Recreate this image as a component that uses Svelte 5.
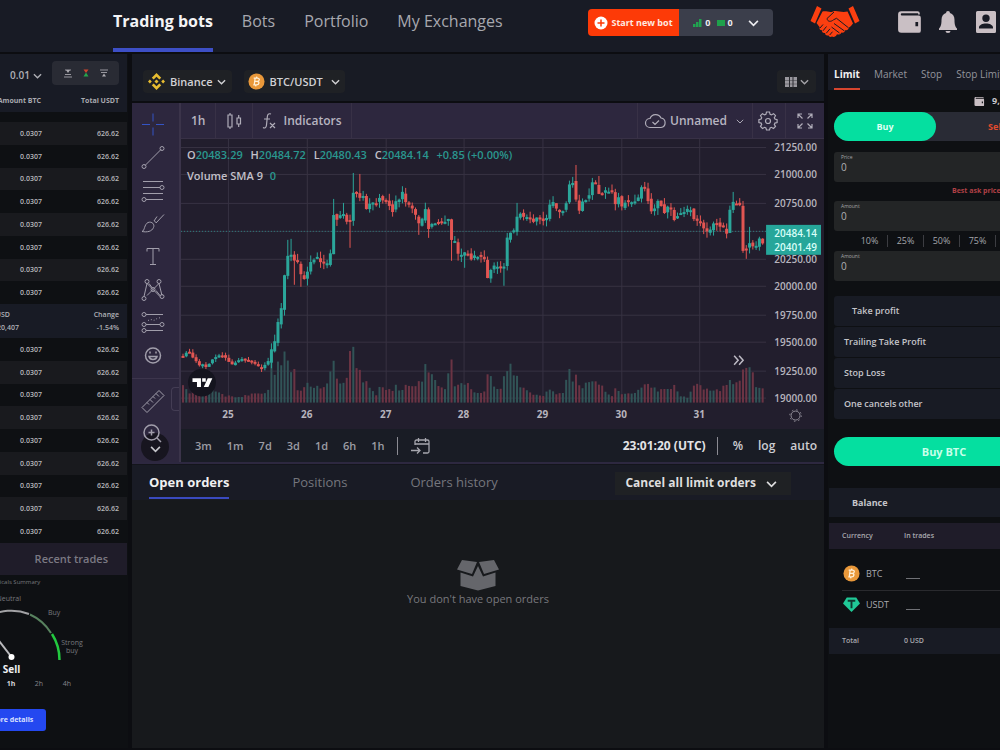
<script>
  const asks = Array.from({ length: 8 }, () => ['0.0307', '626.62']);
  const bids = Array.from({ length: 9 }, () => ['0.0307', '626.62']);
  const nav = ['Trading bots', 'Bots', 'Portfolio', 'My Exchanges'];
  const ranges = ['3m', '1m', '7d', '3d', '1d', '6h', '1h'];
  const orderTypes = ['Limit', 'Market', 'Stop', 'Stop Limit'];
  const options = ['Take profit', 'Trailing Take Profit', 'Stop Loss', 'One cancels other'];
  const priceLabels = [
    [8, '21250.00'], [35, '21000.00'], [64, '20750.00'], [92, ''], [120, '20250.00'],
    [147, '20000.00'], [176, '19750.00'], [203, '19500.00'], [232, '19250.00'], [259, '19000.00']
  ];
  const days = [[47, 25], [126, 26], [205, 27], [283, 28], [362, 29], [441, 30], [519, 31]];

  // Close prices as [x, y] on the plot, joined linearly between points.
  const closes = [
    [1,218],[6,213],[9,214],[12,219],[15,222],[16,227],[21,226],[25,228],[28,225],[31,221],[34,219],[37,216],[41,217],[44,219],[47,222],[51,226],[55,223],[58,221],[62,220],[65,221],[68,222],[71,223],[75,226],[80,230],[83,227],[87,223],[89,220],[92,204],[95,204],[98,176],[101,169],[104,134],[107,118],[112,116],[115,126],[118,122],[121,141],[125,139],[128,129],[131,121],[136,119],[139,121],[144,127],[148,124],[151,109],[153,73],[157,82],[161,73],[165,81],[169,86],[172,53],[176,54],[180,61],[183,56],[186,71],[190,63],[196,64],[200,56],[203,62],[207,64],[212,72],[215,63],[219,59],[222,54],[225,63],[231,69],[236,79],[239,88],[242,79],[246,66],[248,89],[252,84],[257,84],[266,82],[269,77],[271,103],[275,102],[277,116],[282,117],[286,112],[292,123],[295,115],[299,119],[303,116],[307,139],[311,128],[316,126],[321,129],[325,126],[327,96],[332,93],[336,89],[337,69],[341,76],[346,79],[349,79],[353,82],[356,77],[361,82],[366,79],[369,66],[372,63],[376,71],[381,74],[385,69],[388,46],[392,41],[396,63],[399,71],[402,63],[405,62],[409,55],[412,44],[415,44],[418,56],[422,53],[431,52],[435,64],[438,56],[441,69],[445,62],[451,63],[457,63],[462,46],[466,53],[470,71],[474,71],[477,62],[482,68],[485,76],[489,64],[494,81],[499,73],[504,73],[510,70],[513,78],[516,86],[518,77],[522,88],[526,95],[531,89],[534,83],[539,86],[543,89],[547,94],[550,69],[553,64],[558,66],[561,69],[562,111],[566,110],[569,103],[572,108],[576,107],[579,99],[583,106],[586,103]
  ];
  const spikes = [
    [107,101],[110,100],[114,146],[121,148],[153,60],[162,64],[168,109],[172,34],[178,35],[237,96],[247,99],[270,122],[284,129],[310,144],[322,147],[337,64],[394,26],[417,37],[463,43],[552,53],[571,88],[565,120]
  ];
  const volumes = [
    [1,17],[7,10],[17,9],[34,12],[44,6],[59,6],[81,9],[87,12],[90,36],[94,27],[97,46],[100,33],[103,59],[106,46],[110,31],[113,33],[116,13],[123,13],[127,18],[131,14],[139,14],[144,16],[149,25],[152,40],[156,25],[162,18],[167,25],[171,65],[175,31],[179,31],[183,20],[189,16],[195,5],[199,17],[203,13],[211,12],[215,17],[219,12],[224,16],[232,16],[237,20],[241,16],[244,37],[249,35],[254,20],[259,13],[266,12],[270,49],[273,12],[277,18],[283,20],[289,16],[295,9],[303,9],[306,25],[311,23],[315,13],[320,13],[323,25],[327,38],[330,33],[335,28],[338,18],[346,11],[354,7],[364,7],[370,15],[375,9],[383,10],[388,35],[392,18],[395,32],[399,18],[404,14],[408,22],[416,20],[421,18],[427,7],[433,7],[435,15],[441,9],[452,9],[461,15],[471,17],[477,13],[487,13],[494,16],[499,7],[509,5],[513,17],[521,15],[531,10],[541,12],[549,24],[554,18],[559,20],[563,30],[568,36],[572,28],[576,18],[581,17],[585,10]
  ];

  function at(points, x) {
    let i = 1;
    while (i < points.length - 1 && points[i][0] < x) i++;
    const [x0, y0] = points[i - 1];
    const [x1, y1] = points[i];
    const t = Math.max(0, Math.min(1, (x - x0) / (x1 - x0)));
    return y0 + (y1 - y0) * t;
  }
  const wave = (n) => Math.abs((Math.sin(n * 12.9898) * 43758.5453) % 1);

  const step = 3.28;
  const candles = Array.from({ length: 178 }, (_, i) => {
    const x = 2 + i * step;
    const calm = x < 88 ? 0.5 : 1;
    const open = at(closes, x - step) + (wave(i) - 0.5) * 3 * calm;
    const close = at(closes, x) + (wave(i + 400) - 0.5) * 3 * calm;
    let high = Math.min(open, close) - wave(i + 70) * 7 * calm;
    let low = Math.max(open, close) + wave(i + 170) * 7 * calm;
    for (const [sx, sy] of spikes) {
      if (Math.abs(sx - x) <= step / 2) {
        high = Math.min(high, sy);
        low = Math.max(low, sy);
      }
    }
    return {
      x, high, low,
      top: Math.min(open, close),
      size: Math.max(2, Math.abs(open - close)),
      up: close <= open,
      volume: at(volumes, x) * (0.85 + wave(i + 900) * 0.35)
    };
  });
</script>

{#snippet chevron(size = 9)}
  <svg class="chevron" width={size} height={size} viewBox="0 0 10 10" aria-hidden="true"><path d="M1 3.500l4 4 4-4" /></svg>
{/snippet}

{#snippet coin(size = 17)}
  <svg width={size} height={size} viewBox="0 0 18 18" aria-hidden="true">
    <circle cx="9" cy="9" r="8.5" fill="#e9983a" />
    <path d="M7.6 5l-1 8M6 5.4h4.2c2.6.3 2.3 3.3-.4 3.4H7.2h2.4c3 .2 2.4 3.7-.6 3.8H5.6M9.3 3.8l-.3 1.6M8.3 12.6l-.2 1.6" fill="none" stroke="#fff0d8" stroke-width="1.4" />
  </svg>
{/snippet}

{#snippet wallet(size = 26)}
  <svg width={size} height={size} viewBox="0 0 24 24" aria-hidden="true">
    <path fill="#c9bfc4" fill-rule="evenodd" d="M4 2h15a2 2 0 0 1 2 2v1h-1.500V4H4.500a1 1 0 0 0 0 2H20a2 2 0 0 1 2 2v12a2 2 0 0 1-2 2H4a3 3 0 0 1-3-3V5a3 3 0 0 1 3-3zm13 10v4h2.500v-4z" />
  </svg>
{/snippet}

<div class="page">
  <header>
    <nav>
      {#each nav as item, i}
        <a href="#{item}" class:active={i === 0}>{item}</a>
      {/each}
    </nav>
    <div class="bot">
      <button class="start">
        <svg width="14" height="14" viewBox="0 0 14 14" aria-hidden="true"><circle cx="7" cy="7" r="6.500" fill="#fff" /><path d="M7 3.500v7M3.500 7h7" stroke="#fd3a07" stroke-width="1.5" /></svg>
        Start new bot
      </button>
      <button class="counts" aria-label="Bot status">
        <svg width="9" height="8" viewBox="0 0 9 8" aria-hidden="true"><path fill="#20a350" d="M0 5h2.500v3H0zM3 3h2.500v5H3zM6 0h2.500v8H6z" /></svg>
        <span>0</span>
        <svg class="second" width="8" height="8" viewBox="0 0 8 8" aria-hidden="true"><path fill="#1fa04b" d="M0 1h8v6H0z" /></svg>
        <span>0</span>
        {@render chevron(11)}
      </button>
    </div>
    <div class="icons">
      <svg class="shake" width="50" height="32" viewBox="0 0 50 32" aria-hidden="true">
        <g fill="#fb3f10">
          <path d="M7 0l4.500 2.500L5 17.500 .5 15zM43 0l-4.500 2.500L45 17.500l4.500-2.500z" />
          <path d="M12.500 5.500c4-1 7 1.500 10.500 0 4-1.500 8 1.500 14.500 0l5.500 12c-1.500 2-2.500 3-4 4-.5 2-2 3-3.500 2.500-.5 2-2 3-4 2.500-1 2-3 2.500-4.500 1.700-1.200 2.300-3 3.300-5 2.300-1.600.8-3 .3-3.600-1.200-1.900.7-3.400-.4-3.400-2.300-2 .5-3.300-1-3-2.700-2 .2-3-1.300-2.300-3L6.500 17z" />
        </g>
        <path d="M24 6l-7 6.500c.5 3.500 4 3.500 6.500 1.300l3-1.500 12 9.500M24 17.500l10.500 7.500M21.500 21l8 6M10 22l3-3.500M13 24.800l3.500-4.300M16.200 27.300l3.800-4.500M19.700 29l2.800-3.300" fill="none" stroke="#181b25" stroke-width="1" />
      </svg>
      {@render wallet()}
      <svg class="bell" width="20" height="24" viewBox="0 0 20 24" aria-hidden="true"><path fill="#c9bfc4" d="M10 1a2 2 0 0 0-2 2c-3 1-4.500 3.500-4.500 7 0 5-1 7-2.500 8.500V20h18v-1.500C17.500 17 16.500 15 16.500 10c0-3.500-1.500-6-4.500-7a2 2 0 0 0-2-2zM7.500 21a2.500 2 0 0 0 5 0z" /></svg>
      <svg width="22" height="24" viewBox="0 0 22 24" aria-hidden="true"><path fill="#c9bfc4" fill-rule="evenodd" d="M2.500 1h17a1.500 1.500 0 0 1 1.500 1.500v19a1.500 1.500 0 0 1-1.500 1.500h-17A1.500 1.500 0 0 1 1 21.500v-19A1.500 1.500 0 0 1 2.500 1zM11 4.500a3.700 3.700 0 1 0 0 7.400 3.700 3.700 0 0 0 0-7.400zM4 18.500h14v-1c0-2.500-3.500-4-7-4s-7 1.500-7 4z" /></svg>
    </div>
  </header>

  <main>
    <aside class="book">
      <div class="wide">
        <div class="book-tools">
          <button class="tick">0.01 {@render chevron(9)}</button>
          <div class="modes">
            <svg width="10" height="10" viewBox="0 0 10 10" aria-hidden="true"><path d="M2 2h6M2 6.500h6M1 9h8" stroke="#98979e" /><path d="M3 2h4L5 5z" fill="#aaa9af" /></svg>
            <svg width="8" height="10" viewBox="0 0 8 10" aria-hidden="true"><path d="M1.500 1.500h5L4 5z" fill="#cf442c" /><path d="M4 4.500l2.500 4h-5z" fill="#25a34c" /></svg>
            <svg width="10" height="10" viewBox="0 0 10 10" aria-hidden="true"><path d="M1 2h8M2 4.500h6" stroke="#98979e" /><path d="M3 8.500h4L5 5.500z" fill="#aaa9af" /></svg>
          </div>
        </div>
        <div class="book-head"><span>Amount BTC</span><span>Total USDT</span></div>
        <table class="asks">
          <tbody>
            {#each asks as row}<tr><td>{row[0]}</td><td>{row[1]}</td></tr>{/each}
          </tbody>
        </table>
        <div class="last">
          <span class="usd">USD</span><span>Change</span>
          <span>20,407</span><span>-1.54%</span>
        </div>
        <table class="bids">
          <tbody>
            {#each bids as row}<tr><td>{row[0]}</td><td>{row[1]}</td></tr>{/each}
          </tbody>
        </table>
        <h2 class="recent">Recent trades</h2>
        <div class="summary">
          <h3>Technicals Summary</h3>
          <svg class="gauge" width="231" height="74" viewBox="0 0 231 74" role="img" aria-label="Sell">
            <path d="M67.500 70A48 48 0 0 1 133 25" stroke="#a2a2a5" />
            <path d="M134 25.500A48 48 0 0 1 155 44" stroke="#58825f" />
            <path d="M156 45A48 48 0 0 1 163.500 71" stroke="#22c93f" stroke-width="2.500" />
            <path d="M115.500 68L100 48" stroke="#b9b9bc" />
            <circle cx="115.500" cy="68" r="3" fill="#fff" />
            <text x="125" y="12" text-anchor="end">Neutral</text>
            <text x="152" y="26">Buy</text>
            <text x="176" y="56" text-anchor="middle">Strong</text>
            <text x="176" y="64" text-anchor="middle">buy</text>
          </svg>
          <strong>Sell</strong>
          <div class="spans"><button class="on">1h</button><button>2h</button><button>4h</button></div>
          <button class="more">More details</button>
        </div>
      </div>
    </aside>

    <section class="center">
      <div class="market">
        <button class="chip">
          <svg width="17" height="17" viewBox="0 0 18 18" aria-hidden="true"><path fill="#e8bd31" d="M9 0l5 5-2 2-3-3-3 3-2-2zM9 18l5-5-2-2-3 3-3-3-2 2zM2 7l2 2-2 2-2-2zM16 7l2 2-2 2-2-2zM9 6.800L11.200 9 9 11.200 6.800 9z" /></svg>
          Binance {@render chevron()}
        </button>
        <button class="chip pair">{@render coin()} BTC/USDT {@render chevron()}</button>
        <button class="chip layout" aria-label="Layout">
          <svg width="12" height="12" viewBox="0 0 12 12" aria-hidden="true"><path fill="#9a989e" d="M0 1h12v10H0z" /><path d="M0 4.500h12M0 8h12" stroke="#6c6b70" /><path d="M4.500 0v12M8 0v12" stroke="#2a2b30" /></svg>
          {@render chevron()}
        </button>
      </div>

      <div class="chart">
        <div class="tools">
          <svg viewBox="0 0 24 24" class="cross"><path d="M12 1v8M12 15v8M1 12h8M15 12h8" /></svg>
          <svg viewBox="0 0 24 24"><path d="M4 20L20 4" /><circle cx="3" cy="21" r="2" /><circle cx="21" cy="3" r="2" /></svg>
          <svg viewBox="0 0 24 24"><path d="M2 3h20M2 9h17M2 15h20M5 21h17" /><circle cx="21" cy="9" r="2" /><circle cx="3" cy="21" r="2" /></svg>
          <svg viewBox="0 0 24 24"><path d="M1 20c3-1 2-7 6-9 4-1.500 7 2 5.500 5C11 20 6 21 1 20zM13 9.500c1 0 2 1 2 2L23 3M13 9.500L16 5" /></svg>
          <svg viewBox="0 0 24 24"><path d="M6 7V4h12v3M12 4v16M9 20h6" /></svg>
          <svg viewBox="0 0 24 24"><path d="M3 19L6 6l13 13M6 18L18 6l3 12M8 6l3 4M15 13l4 5" /><circle cx="6" cy="4" r="2" /><circle cx="18" cy="4" r="2" /><circle cx="12" cy="12" r="2" /><circle cx="3" cy="21" r="2" /><circle cx="21" cy="19" r="2" /></svg>
          <svg viewBox="0 0 24 24"><path d="M5 4h17M5 14h14M5 20h17" /><path d="M7 10l3-1 3 1 3-2 4-1" stroke-dasharray="1 2" /><circle cx="3" cy="4" r="2" /><circle cx="3" cy="14" r="2" /><circle cx="21" cy="14" r="2" /><circle cx="3" cy="20" r="2" /></svg>
          <svg viewBox="0 0 24 24" class="bold"><circle cx="12" cy="12" r="7.500" /><path d="M8 13c1 4 7 4 8 0zM9 8v2M15 8v2" /></svg>
          <hr />
          <svg viewBox="0 0 24 24"><path d="M1 18L18 1l5 5L6 23zM6 13l2 2M9 10l3 3M12 7l2 2M15 4l3 3" /></svg>
          <button class="down" aria-label="More tools">{@render chevron(11)}</button>
          <svg viewBox="0 0 24 24" class="bold zoom"><circle cx="10.500" cy="10" r="7.500" /><path d="M16 15.500l4 4M10.500 7v6M7.500 10h6" /></svg>
          <span class="handle"></span>
        </div>

        <div class="plot">
          <div class="chart-bar">
            <button class="cell">1h</button>
            <button class="cell" aria-label="Chart style"><svg width="16" height="18" viewBox="0 0 16 18" aria-hidden="true"><path d="M2 3h4v12H2zM4 1v2M4 15v2M11 6h3.500v6H11zM12.700 3v3M12.700 12v3" /></svg></button>
            <button class="cell ind"><svg width="14" height="18" viewBox="0 0 14 18" aria-hidden="true"><path d="M9 2C6 1 5.500 3 5.300 5L4.500 13c-.2 3-2 3.500-3.500 2.500M2 7h6M8 11l5 5M13 11l-5 5" /></svg>Indicators</button>
            <button class="cell unnamed"><svg width="23" height="18" viewBox="0 0 23 18" aria-hidden="true"><path d="M6 15.500a4.500 4.500 0 0 1 0-9 6 6 0 0 1 11-.5 4.800 4.800 0 0 1 0 9.500zM8.500 10l2.500 2.500L15 8.500" /></svg>Unnamed {@render chevron(8)}</button>
            <button class="cell gear" aria-label="Settings"><svg width="20" height="20" viewBox="0 0 20 20" aria-hidden="true"><path d="M8.500 1h3l.6 2.300 1.300.6 2.100-1.200 2 2-1.200 2.100.6 1.300 2.200.6v2.800l-2.200.6-.6 1.300 1.200 2.100-2 2-2.100-1.200-1.300.6-.6 2.100h-3l-.6-2.100-1.300-.6-2.100 1.200-2-2 1.200-2.100-.6-1.300L.9 11.500V8.700l2.200-.6.6-1.300-1.200-2.100 2-2 2.100 1.200 1.300-.6z" /><circle cx="10" cy="10" r="2.500" /></svg></button>
            <button class="cell full" aria-label="Full screen"><svg width="18" height="18" viewBox="0 0 18 18" aria-hidden="true"><path d="M2 6V2h4M2 2l4.500 4.500M12 2h4v4M16 2l-4.500 4.500M2 12v4h4M2 16l4.500-4.500M16 12v4h-4M16 16l-4.500-4.500" /></svg></button>
          </div>

          <div class="canvas">
            <svg class="series" viewBox="0 0 644 290" role="img" aria-label="BTC/USDT hourly candles">
              <g class="grid">
                {#each priceLabels as [y]}<path d="M0 {y}.5H586" />{/each}
                {#each days as [x]}<path d="M{x}.5 0V264" />{/each}
              </g>
              <path d="M0 92.500H586" stroke="#2c7f7f" stroke-dasharray="1 2" />
              {#each candles as c}
                <rect x={c.x - 1} y={264 - c.volume} width="2" height={c.volume} fill={c.up ? '#315457' : '#6b3444'} />
              {/each}
              {#each candles as c}
                <g fill={c.up ? '#2ba69a' : '#e25552'}>
                  <rect x={c.x - 0.5} y={c.high} width="1" height={c.low - c.high} />
                  <rect x={c.x - 1.5} y={c.top} width="3" height={c.size} />
                </g>
              {/each}
              <g class="prices">
                {#each priceLabels as [y, label]}{#if label}<text x="637" y={y + 4}>{label}</text>{/if}{/each}
              </g>
              <rect x="586" y="86" width="55" height="30" fill="#26a69a" />
              <g class="prices now"><text x="637" y="98">20484.14</text><text x="637" y="112">20401.49</text></g>
              <g class="days">{#each days as [x, label]}<text {x} y="279">{label}</text>{/each}</g>
              <g fill="none" stroke="#8f8c97"><circle cx="615.500" cy="277" r="4.500" /><circle cx="615.500" cy="277" r="5.800" stroke-dasharray="1.500 3.050" /></g>
              <path d="M554 217l4 4.500-4 4.500M559 217l4 4.500-4 4.500" fill="none" stroke="#bdbac4" stroke-width="1.500" />
              <circle cx="21" cy="244" r="14" fill="#14141e" />
              <path fill="#fff" d="M11.500 239.500h8.500v9h-4v-5h-4.500zM21.200 239.500h3.600v3.600h-3.600zM26.800 239.500h4.600l-4 9h-4.600z" />
            </svg>
            <div class="legend">
              <p class="ohlc">O<b>20483.29</b> H<b>20484.72</b> L<b>20480.43</b> C<b>20484.14</b> <b>+0.85 (+0.00%)</b></p>
              <p>Volume SMA 9 <b class="zero">0</b></p>
            </div>
          </div>

          <div class="range-bar">
            {#each ranges as r}<button>{r}</button>{/each}
            <i></i>
            <svg width="20" height="18" viewBox="0 0 20 18" aria-hidden="true"><path d="M5 8V4.500A1.500 1.500 0 0 1 6.500 3h11A1.500 1.500 0 0 1 19 4.500v10a1.500 1.500 0 0 1-1.500 1.500H13M5 7h14M8.500 1v4M15.500 1v4M1 13.500h9M7 10.500l3 3-3 3" /></svg>
            <span class="clock">23:01:20 (UTC)</span>
            <i></i>
            <button class="scale">%</button><button class="scale">log</button><button class="scale">auto</button>
          </div>
        </div>
      </div>

      <div class="orders-bar">
        <button class="tab active">Open orders</button>
        <button class="tab">Positions</button>
        <button class="tab">Orders history</button>
        <button class="cancel">Cancel all limit orders {@render chevron(11)}</button>
      </div>
      <div class="empty">
        <svg width="44" height="32" viewBox="0 0 44 32" aria-hidden="true"><path fill="#65666b" d="M6 1l15 2-5 12L1 10.500zM38 1L23 3l5 12 15-4.500zM4.500 13.500L17 17.500 22 7l5 10.500 12.500-4V27L22 31.500 4.500 27z" /></svg>
        <p>You don't have open orders</p>
      </div>
    </section>

    <aside class="trade">
      <div class="form">
        <div class="types">
          {#each orderTypes as type, i}<button class:active={i === 0}>{type}</button>{/each}
        </div>
        <div class="funds">{@render wallet(11)} <span>9,</span></div>
        <div class="side"><button class="buy">Buy</button><button class="sell">Sell</button></div>
        <div class="field"><label for="price">Price</label><input id="price" value="0" /></div>
        <p class="ask">Best ask price</p>
        <div class="field"><label for="amount">Amount</label><input id="amount" value="0" /></div>
        <div class="percents"><button>10%</button><button>25%</button><button>50%</button><button>75%</button></div>
        <div class="field"><label for="total">Amount</label><input id="total" value="0" /></div>
        <div class="options">
          {#each options as option, i}<button class:indent={i === 0}>{option}</button>{/each}
        </div>
        <button class="submit">Buy BTC</button>
        <h2 class="balance">Balance</h2>
        <table class="funds-table">
          <thead><tr><th>Currency</th><th>In trades</th></tr></thead>
          <tbody>
            <tr class="btc"><td><span class="asset">{@render coin()}BTC</span></td><td><span class="dash"></span></td></tr>
            <tr class="usdt"><td><span class="asset"><svg width="17" height="17" viewBox="0 0 18 18" aria-hidden="true"><path fill="#20c997" d="M4 1.500h10L18 8l-9 9L0 8z" /><path d="M5 5h8M9 5v8" fill="none" stroke="#10372f" stroke-width="2" /></svg>USDT</span></td><td><span class="dash"></span></td></tr>
          </tbody>
          <tfoot><tr><td>Total</td><td>0 USD</td></tr></tfoot>
        </table>
      </div>
    </aside>
  </main>
</div>

<style>
  :global(body) { background: #0c0d11; }
  .page { min-height: 100vh; box-sizing: border-box; display: flex; flex-direction: column; overflow: hidden; font: 11px/16px "Open Sans", "Noto Sans", sans-serif; color: #c5c5ca; padding-bottom: 2px; }
  .page :global(*) { box-sizing: border-box; }
  button { font: inherit; color: inherit; background: none; border: 0; padding: 0; white-space: nowrap; display: flex; align-items: center; justify-content: center; cursor: pointer; }
  h2, h3, p { margin: 0; font-weight: 400; }
  svg { flex: none; }
  .chevron { fill: none; stroke: currentColor; stroke-width: 1.5; }
  table { border-collapse: collapse; }
  td, th { padding: 0; }

  header { height: 52px; display: flex; background: #181b25; padding: 0 3px 0 113px; }
  nav { display: flex; gap: 29px; }
  nav a { color: #a7a8af; text-decoration: none; font-size: 16px; line-height: 42px; border-bottom: 4px solid transparent; height: 52px; white-space: nowrap; }
  nav a.active { color: #f4f4f6; font-weight: 700; border-color: #3d4fc6; }
  .bot { display: flex; margin: 9px 0 0 auto; height: 27px; border-radius: 4px; overflow: hidden; }
  .start { background: #fd3a07; color: #ffe9e0; width: 91px; gap: 3px; font-size: 9px; font-weight: 700; }
  .counts { background: #3b3e4b; width: 94px; gap: 3px; font-size: 9px; font-weight: 700; color: #ececf0; }
  .counts .second { margin-left: 3px; }
  .counts .chevron { margin-left: 12px; }
  .icons { display: flex; align-items: center; height: 44px; margin-left: 37px; }
  .icons .shake { margin-right: 37px; }
  .icons .bell { margin: 0 17px 0 15px; }

  main { flex: 1; display: grid; grid-template-columns: 128px minmax(0, 1fr) 172px; gap: 4px; padding-top: 2px; }

  .book { display: flex; justify-content: flex-end; overflow: hidden; background: #0e1013; padding-right: 1px; }
  .wide { width: 231px; flex: none; }
  .book-tools { height: 38px; display: flex; align-items: center; justify-content: flex-end; gap: 10px; padding-right: 8px; background: #181b25; }
  .tick { gap: 3px; padding-top: 4px; font-weight: 600; color: #aeafb5; font-size: 10px; }
  .modes { width: 67px; height: 24px; border-radius: 4px; background: #292b34; display: flex; align-items: center; justify-content: center; gap: 9px; }
  .book-head { height: 20px; background: #181b25; display: grid; grid-template-columns: 1fr 78px; text-align: right; padding-right: 8px; font-size: 7px; line-height: 18px; font-weight: 700; color: #a9aab0; }
  .book table { width: 231px; font-size: 7px; line-height: 8px; font-weight: 600; color: #b7b7bb; text-align: right; }
  .asks { height: 182px; margin-top: 10px; }
  .bids { height: 205px; }
  .book td { padding-top: 1px; }
  .book td:last-child { width: 85px; padding-right: 8px; }
  .asks tr:nth-child(odd), .bids tr:nth-child(even) { background: #191a1e; }
  .last { height: 34px; background: #181b25; display: grid; grid-template-columns: 1fr 100px; align-content: center; text-align: right; padding-right: 8px; font-size: 7px; line-height: 13px; font-weight: 600; color: #b0b1b7; }
  .usd { padding-right: 9px; }
  .recent { height: 32px; background: #1f1c29; text-align: right; padding-right: 19px; font-size: 11px; line-height: 32px; font-weight: 600; color: #7b7983; }
  .summary { display: flex; flex-direction: column; align-items: center; }
  h3 { font-size: 6px; line-height: 14px; color: #77787d; }
  .gauge { fill: none; stroke-width: 2; }
  .gauge text { fill: #77787d; font-size: 7px; }
  .summary strong { color: #f0f0f2; font-size: 10px; line-height: 12px; }
  .spans { width: 231px; padding-left: 107px; display: grid; grid-template-columns: repeat(3, 16px); gap: 12px; font-size: 7px; line-height: 18px; color: #85858b; }
  .spans .on { color: #d6d6da; font-weight: 700; }
  .more { width: 68px; height: 22px; margin-top: 16px; border-radius: 3px; background: #2448f0; color: #d9e0ff; font-size: 7px; font-weight: 700; }

  .center { display: flex; flex-direction: column; min-width: 0; }
  .market { height: 47px; background: #181b24; display: flex; align-items: center; gap: 12px; padding: 8px 8px 0 11px; }
  .chip { height: 23px; border-radius: 4px; background: #1f2125; padding: 0 6px 0 5px; gap: 5px; font-size: 11px; font-weight: 600; color: #d2d2d5; }
  .pair { padding: 0 5px 0 4px; gap: 4px; }
  .pair .chevron { margin-left: 4px; }
  .layout { margin-left: auto; gap: 3px; padding: 0 7px 0 8px; color: #a5a4a9; }

  .chart { display: flex; margin-top: 2px; border-bottom: 2px solid #2d2840; }
  .tools { position: relative; width: 49px; flex: none; background: #2d273e; border-right: 2px solid #3b344a; padding: 5px 5px 0 0; display: flex; flex-direction: column; align-items: center; }
  .tools > svg { width: 24px; height: 33px; padding: 4px 0; fill: none; stroke: #a19eab; }
  .tools > svg.cross { stroke: #3454c4; }
  .tools > svg.bold { stroke-width: 1.5; }
  .tools > svg.zoom { position: relative; }
  .tools hr { width: 47px; margin: 6px -5px 6px 0; border: 0; border-top: 1px solid #3c354c; }
  .down { position: absolute; left: 9px; bottom: 1px; width: 28px; height: 28px; padding-top: 3px; border-radius: 50%; background: #17151f; }
  .handle { position: absolute; right: 0; top: 284px; width: 8px; height: 24px; border: 1px solid #443d54; border-right: 0; border-radius: 4px 0 0 4px; }
  .plot { flex: 1; min-width: 0; display: flex; flex-direction: column; }
  .chart-bar { height: 36px; display: flex; background: #2d273e; border-bottom: 1px solid #383146; }
  .chart-bar svg { fill: none; stroke: #b0adb9; stroke-width: 1.200; }
  .cell { padding: 0 10px; border-right: 1px solid #383146; font-size: 12px; font-weight: 600; color: #b7b4c0; gap: 7px; }
  .ind { padding: 0 9px; }
  .unnamed { margin-left: auto; border-left: 1px solid #383146; padding: 0 8px 0 6px; gap: 3px; }
  .unnamed .chevron { margin-left: 6px; }
  .gear { padding: 0 7px 0 5px; }
  .full { border-right: 0; padding: 0 10px; }
  .canvas { position: relative; background: #221e2d; }
  .series { display: block; width: 100%; }
  .grid { stroke: #373242; }
  .series text { font-size: 10px; font-weight: 600; fill: #b7b4bd; }
  .prices { text-anchor: end; }
  .prices.now text { fill: #d9fff8; }
  .series .days text { font-weight: 700; }
  .days { text-anchor: middle; }
  .legend { position: absolute; left: 6px; top: 8px; color: #c3c0c9; }
  .legend p { font-size: 11px; line-height: 16px; font-weight: 600; white-space: nowrap; }
  .legend p + p { margin-top: 5px; }
  .legend b { font-weight: 600; color: #2a978f; }
  .legend .ohlc b { margin-right: 5px; }
  .legend .zero { margin-left: 4px; }
  .range-bar { height: 33px; display: flex; align-items: center; gap: 15px; background: #191c25; padding: 2px 7px 0 14px; font-size: 11px; font-weight: 600; color: #9c9ca4; }
  .range-bar i { width: 1px; height: 18px; background: #8b8b93; margin: 0 -3px; }
  .range-bar svg { fill: none; stroke: #a6a6ae; stroke-width: 1.300; }
  .clock { margin-left: auto; color: #e3e3e6; font-size: 12px; font-weight: 700; }
  .clock + i { margin: 0 0 0 -4px; }
  .scale { font-size: 12px; color: #cdcdd2; }

  .orders-bar { height: 36px; display: flex; align-items: flex-start; background: #191b25; border-top: 1px solid #14151c; padding: 0 33px 0 17px; }
  .tab { height: 34px; font-size: 13px; padding: 3px 0 0; margin-right: 63px; color: #75767d; border-bottom: 2px solid transparent; }
  .tab.active { color: #f0f0f2; font-weight: 700; border-color: #3a4ac0; }
  .cancel { margin: 7px 0 0 auto; height: 23px; padding: 0 14px 0 10px; gap: 10px; background: #1f2124; font-size: 12px; font-weight: 700; color: #dededf; }
  .empty { flex: 1; background: #17191c; display: flex; flex-direction: column; align-items: center; padding-top: 59px; color: #77787d; font-size: 11px; }

  .trade { overflow: hidden; background: #0e1013; }
  .form { width: 232px; display: flex; flex-direction: column; }
  .form > * { margin-left: 6px; }
  .form > .types { height: 36px; margin-left: 0; padding-left: 6px; display: flex; gap: 14px; background: #181b25; font-size: 10px; color: #94959c; }
  .types button { height: 36px; padding-top: 6px; border-bottom: 2px solid transparent; }
  .types .active { color: #f0f0f2; font-weight: 700; border-color: #d6452f; }
  .funds { height: 22px; display: flex; align-items: center; gap: 7px; padding-left: 140px; font-size: 9px; font-weight: 700; }
  .side { height: 29px; width: 220px; border-radius: 15px; background: #292b35; display: flex; font-size: 9px; font-weight: 700; margin-bottom: 11px; }
  .buy { width: 102px; border-radius: 15px; background: #05dfa0; color: #ddfff3; }
  .sell { flex: 1; color: #e24a2d; padding-left: 2px; }
  .field { width: 220px; height: 30px; background: #232526; border-radius: 3px; padding: 2px 7px; display: flex; flex-direction: column; }
  .field label { font-size: 5px; line-height: 6px; color: #a5a6a8; }
  .field input { width: 100%; height: 14px; background: none; border: 0; padding: 0; outline: 0; font: 10px/14px "Open Sans", sans-serif; color: #b0b1b3; }
  .ask { height: 19px; line-height: 17px; padding-left: 118px; font-size: 7px; font-weight: 700; color: #b04046; white-space: nowrap; }
  .percents { height: 20px; width: 165px; padding-left: 18px; display: grid; grid-template-columns: repeat(4, 36px); align-items: center; font-size: 9px; color: #a4a5aa; }
  .percents button { height: 12px; border-right: 1px solid #3c3d42; }
  .options { display: grid; gap: 1px; margin-top: 15px; width: 220px; }
  .options button { height: 30px; background: #181b24; border-radius: 3px; justify-content: flex-start; padding-left: 10px; font-size: 9px; font-weight: 600; }
  .options .indent { padding-left: 18px; }
  .submit { width: 220px; height: 29px; border-radius: 15px; background: #05dfa0; color: #c8ffea; font-size: 11px; font-weight: 700; margin-top: 18px; }
  .form > .balance { height: 29px; margin: 22px 0 6px 1px; padding-left: 23px; background: #181b24; font-size: 9px; line-height: 29px; font-weight: 700; }
  .form > .funds-table { margin-left: 1px; table-layout: fixed; width: 231px; text-align: left; font-size: 7px; line-height: 10px; font-weight: 600; color: #a9a9af; }
  .funds-table th { height: 26px; font-weight: 600; background: #1f1c29; }
  .funds-table td:first-child, .funds-table th:first-child { padding-left: 13px; width: 75px; }
  .btc td { height: 42px; padding-top: 7px; }
  .btc { background: linear-gradient(#292a2e, #292a2e) 13px 100% / 100% 1px no-repeat; }
  .usdt td { height: 37px; padding-bottom: 10px; }
  .asset { display: flex; align-items: center; gap: 6px; font-size: 9px; font-weight: 400; line-height: 17px; margin-left: 1px; }
  .dash { display: block; width: 14px; height: 1px; margin: 9px 0 0 2px; background: #707176; }
  tfoot td { height: 26px; background: #181b24; }
</style>
